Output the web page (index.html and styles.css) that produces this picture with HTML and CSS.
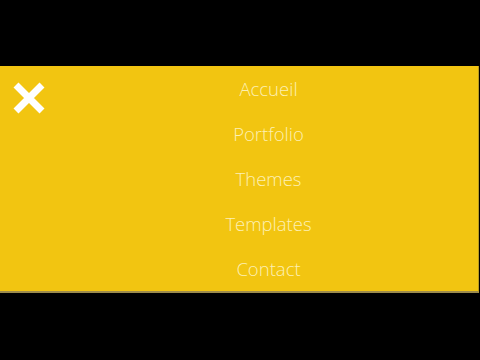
FILE: index.html
```html
<!DOCTYPE html>
<html lang="fr">
<head>
    <meta charset="UTF-8">
    <meta name="viewport" content="width=device-width, initial-scale=1.0">
    <title>Menu</title>
    <link rel="stylesheet" href="styles.css">
</head>
<body>

<div class="overlay">
    <a href="#" class="close" aria-label="Fermer">
        <svg width="34" height="32" viewBox="0 0 34 32">
            <path d="M4 3 L30 29 M30 3 L4 29" stroke="#fff" stroke-width="7" fill="none"/>
        </svg>
    </a>
    <ul class="menu">
        <li><a href="#">Accueil</a></li>
        <li><a href="#">Portfolio</a></li>
        <li><a href="#">Themes</a></li>
        <li><a href="#">Templates</a></li>
        <li><a href="#">Contact</a></li>
    </ul>
</div>

</body>
</html>
```

FILE: styles.css
```css
body {
    margin: 0;
    background-color: #000;
    font-family: "Open Sans", sans-serif;
}
.overlay {
    position: relative;
    margin-top: 66px;
    width: 478px;
    background-color: #f2c511;
    border-bottom: 2px solid #9e8c4c;
    border-right: 1px solid #b89a20;
}
.close {
    position: absolute;
    left: 12px;
    top: 16px;
    display: block;
    line-height: 0;
}
.menu {
    list-style: none;
    margin: 0;
    padding: 0 0 0 59px;
    text-align: center;
}
.menu li {
    font-size: 18.5px;
    line-height: 45px;
}
.menu a {
    font-weight: 300;
    color: #fdf0b4;
    text-decoration: none;
}
```
